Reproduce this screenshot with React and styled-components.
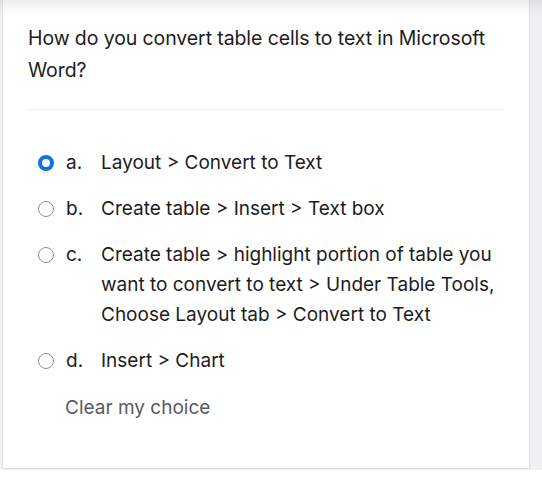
import React, { useState } from "react";
import styled, { createGlobalStyle } from "styled-components";

const GlobalStyle = createGlobalStyle`
  html, body {
    margin: 0;
    padding: 0;
    background: #ffffff;
  }
  body {
    font-family: "Inter", "Liberation Sans", sans-serif;
    color: #1d1d1f;
  }
`;

const Page = styled.div`
  width: 542px;
  height: 482px;
  display: flex;
  background: linear-gradient(#ffffff, #ffffff) no-repeat 0 470px / 100% 12px, #eef0f2;
  position: relative;
  &::before {
    content: "";
    position: absolute;
    left: 0;
    right: 0;
    top: 0;
    height: 14px;
    background: linear-gradient(rgba(0, 0, 0, 0.07), rgba(0, 0, 0, 0));
    pointer-events: none;
  }
`;

const Card = styled.div`
  width: 528px;
  height: 469px;
  margin-left: 2px;
  background: #ffffff;
  border-left: 1px solid #e4e6e8;
  border-right: 1px solid #dfe2e4;
  border-bottom: 1px solid #dcdfe1;
  padding: 0 24px 0 25px;
  box-sizing: border-box;
`;

const Question = styled.p`
  margin: 0;
  padding-top: 22px;
  font-size: 19.5px;
  line-height: 32px;
  letter-spacing: -0.1px;
  color: #1c1c1e;
`;

const Divider = styled.hr`
  border: none;
  border-top: 1px solid #eceef0;
  margin: 23px 0 0 0;
`;

const Options = styled.div`
  display: flex;
  flex-direction: column;
  gap: 16px;
  padding: 38px 0 0 10px;
`;

const Option = styled.label`
  display: flex;
  align-items: flex-start;
  font-size: 19px;
  line-height: 30px;
  color: #1c1c1e;
  cursor: pointer;
`;

const Radio = styled.span`
  flex: none;
  width: 16px;
  height: 16px;
  margin-top: 7px;
  border-radius: 50%;
  box-sizing: border-box;
  border: ${(p) => (p.$checked ? "4.5px solid #1271e0" : "1.5px solid #8e8e93")};
  background: #ffffff;
`;

const Letter = styled.span`
  flex: none;
  width: 35px;
  margin-left: 12px;
`;

const Text = styled.span`
  flex: 1;
`;

const Clear = styled.button`
  margin: 17px 0 0 37px;
  padding: 0;
  border: none;
  background: none;
  font-family: inherit;
  font-size: 19px;
  line-height: 30px;
  color: #5a5a5e;
  cursor: pointer;
`;

const answers = [
  { letter: "a.", text: "Layout > Convert to Text" },
  { letter: "b.", text: "Create table > Insert > Text box" },
  {
    letter: "c.",
    text: "Create table > highlight portion of table you want to convert to text > Under Table Tools, Choose Layout tab > Convert to Text",
  },
  { letter: "d.", text: "Insert > Chart" },
];

export default function App() {
  const [choice, setChoice] = useState(0);
  return (
    <>
      <GlobalStyle />
      <Page>
        <Card>
          <Question>How do you convert table cells to text in Microsoft Word?</Question>
          <Divider />
          <Options>
            {answers.map((a, i) => (
              <Option key={a.letter} onClick={() => setChoice(i)}>
                <Radio $checked={choice === i} />
                <Letter>{a.letter}</Letter>
                <Text>{a.text}</Text>
              </Option>
            ))}
          </Options>
          <Clear onClick={() => setChoice(null)}>Clear my choice</Clear>
        </Card>
      </Page>
    </>
  );
}
